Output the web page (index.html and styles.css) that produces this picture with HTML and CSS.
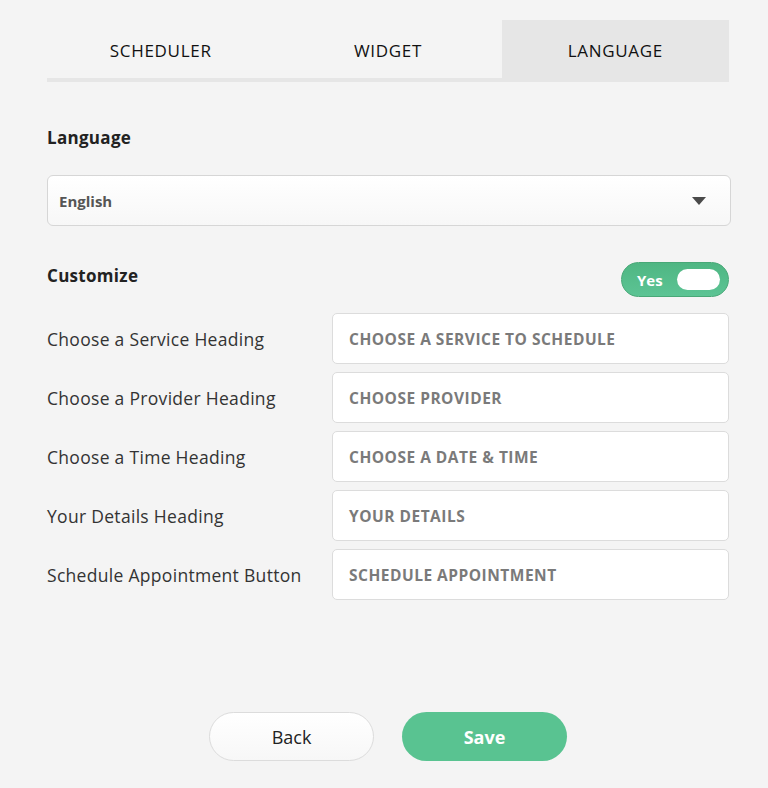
FILE: index.html
```html
<!DOCTYPE html>
<html lang="en">
<head>
<meta charset="utf-8">
<title>Language settings</title>
<link rel="stylesheet" href="styles.css">
</head>
<body>
<div class="page">
  <nav class="tabs">
    <div class="tab">SCHEDULER</div>
    <div class="tab">WIDGET</div>
    <div class="tab active">LANGUAGE</div>
  </nav>

  <h2 class="section-title lang-title">Language</h2>
  <div class="select">
    <span class="select-value">English</span>
    <svg class="caret" width="14" height="8" viewBox="0 0 14 8"><path d="M0 0 H14 L7 8 Z" fill="#4a4a4a"/></svg>
  </div>

  <div class="customize-head">
    <h2 class="section-title custom-title">Customize</h2>
    <div class="toggle">
      <span class="toggle-label">Yes</span>
      <span class="knob"></span>
    </div>
  </div>

  <div class="fields">
    <div class="field-row">
      <label class="field-label">Choose a Service Heading</label>
      <div class="field-input">CHOOSE A SERVICE TO SCHEDULE</div>
    </div>
    <div class="field-row">
      <label class="field-label">Choose a Provider Heading</label>
      <div class="field-input">CHOOSE PROVIDER</div>
    </div>
    <div class="field-row">
      <label class="field-label">Choose a Time Heading</label>
      <div class="field-input">CHOOSE A DATE &amp; TIME</div>
    </div>
    <div class="field-row">
      <label class="field-label">Your Details Heading</label>
      <div class="field-input">YOUR DETAILS</div>
    </div>
    <div class="field-row">
      <label class="field-label">Schedule Appointment Button</label>
      <div class="field-input">SCHEDULE APPOINTMENT</div>
    </div>
  </div>

  <div class="actions">
    <button class="btn btn-back">Back</button>
    <button class="btn btn-save">Save</button>
  </div>
</div>
</body>
</html>
```

FILE: styles.css
```css
* { box-sizing: border-box; }
html, body { margin: 0; padding: 0; }
body {
  background: #f4f4f4;
  font-family: "Open Sans", Lato, sans-serif;
  color: #222;
}
.page {
  width: 682px;
  margin-left: 47px;
  padding-top: 20px;
}
.tabs {
  display: flex;
  border-bottom: 4px solid #e6e6e6;
}
.tab {
  flex: 1;
  height: 58px;
  display: flex;
  align-items: center;
  justify-content: center;
  font-size: 17px;
  letter-spacing: 0.7px;
  color: #111;
  padding-top: 2px;
}
.tab.active {
  background: #e6e6e6;
}
.section-title {
  margin: 0;
  font-size: 17px;
  font-weight: 700;
  color: #222;
  line-height: 20px;
  letter-spacing: 0.3px;
}
.lang-title {
  margin-top: 46px;
}
.select {
  margin-top: 27px;
  width: 684px;
  height: 51px;
  border: 1px solid #d6d6d6;
  border-radius: 6px;
  background: linear-gradient(#ffffff, #f7f7f7);
  display: flex;
  align-items: center;
  justify-content: space-between;
  padding: 0 24px 0 11px;
}
.select-value {
  font-size: 15px;
  font-weight: 700;
  color: #555;
}
.customize-head {
  margin-top: 36px;
  display: flex;
  justify-content: space-between;
  align-items: flex-start;
}
.custom-title {
  padding-top: 4px;
}
.toggle {
  width: 108px;
  height: 35px;
  border-radius: 18px;
  background: linear-gradient(#4fb683, #5cc494);
  border: 1px solid #48a877;
  display: flex;
  align-items: center;
  justify-content: space-between;
  padding: 0 8px 0 15px;
}
.toggle-label {
  color: #fff;
  font-weight: 700;
  font-size: 15px;
}
.knob {
  width: 43px;
  height: 21px;
  border-radius: 11px;
  background: #fff;
}
.fields {
  margin-top: 16px;
  display: flex;
  flex-direction: column;
  gap: 8px;
}
.field-row {
  display: flex;
  align-items: center;
}
.field-label {
  width: 285px;
  font-size: 17.5px;
  letter-spacing: 0.3px;
  color: #333;
}
.field-input {
  width: 397px;
  height: 51px;
  background: #fff;
  border: 1px solid #dcdcdc;
  border-radius: 5px;
  display: flex;
  align-items: center;
  padding-left: 16px;
  font-size: 15.5px;
  letter-spacing: 0.5px;
  font-weight: 700;
  color: #7a7a7a;
}
.actions {
  margin-top: 112px;
  display: flex;
  justify-content: center;
  gap: 28px;
}
.btn {
  width: 165px;
  height: 49px;
  border-radius: 25px;
  font-family: inherit;
  font-size: 18px;
}
.btn-back {
  background: linear-gradient(#ffffff, #f7f7f7);
  border: 1px solid #dcdcdc;
  color: #222;
}
.btn-save {
  background: #59c391;
  border: none;
  color: #fff;
  font-weight: 700;
}
```
